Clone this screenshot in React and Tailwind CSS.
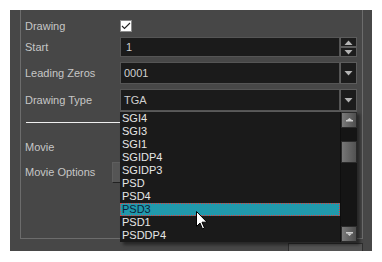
const ITEMS = ["SGI4", "SGI3", "SGI1", "SGIDP4", "SGIDP3", "PSD", "PSD4", "PSD3", "PSD1", "PSDDP4"];

function Tri({ up }) {
  return (
    <svg width="9" height="5" viewBox="0 0 9 5">
      <polygon points={up ? "0.5,5 8.5,5 4.5,0.5" : "0.5,0 8.5,0 4.5,4.5"} fill="#b4b4b4" />
    </svg>
  );
}

function DropButton() {
  return (
    <div className="flex w-[17px] items-center justify-center border border-[#5c5c5c] bg-[#1c1c1c]">
      <Tri />
    </div>
  );
}

function ScrollArrow({ up }) {
  return (
    <div className="flex h-[16px] items-center justify-center border border-[#2a2a2a] bg-gradient-to-r from-[#7a7a7a] to-[#4e4e4e]">
      <svg width="7" height="4" viewBox="0 0 7 4">
        {up ? (
          <>
            <polygon points="1,2 6,2 3.5,0" fill="#cfcfcf" />
            <rect x="0" y="2" width="7" height="1.5" fill="#cfcfcf" />
          </>
        ) : (
          <>
            <rect x="0" y="0" width="7" height="1.5" fill="#cfcfcf" />
            <polygon points="1,1.5 6,1.5 3.5,4" fill="#cfcfcf" />
          </>
        )}
      </svg>
    </div>
  );
}

function Label({ children, w = "w-[99px]" }) {
  return <div className={`${w} shrink-0 pl-[4px] text-[11px] leading-none text-[#c6c6c6]`}>{children}</div>;
}

export default function App() {
  return (
    <div
      className="h-[262px] w-[382px] bg-white pl-[10px] pt-[10px]"
      style={{ fontFamily: '"Liberation Sans", Arial, sans-serif' }}
    >
      <div className="relative h-[241px] w-[362px] overflow-hidden bg-[#474747]">
        {/* group box */}
        <div className="ml-[10px] flex h-[229px] w-[343px] flex-col border-x border-b border-[#6c6c6c]">
          <div className="mt-[10px] flex h-[12px] items-center">
            <Label>Drawing</Label>
            <div className="flex h-[12px] w-[12px] items-center justify-center border border-[#8a8a8a] bg-white">
              <svg width="10" height="8" viewBox="0 0 10 8">
                <polyline points="1,4 3.5,6.5 9,1" fill="none" stroke="#222" strokeWidth="1.1" />
              </svg>
            </div>
          </div>

          <div className="mt-[5px] flex h-[20px] items-center">
            <Label>Start</Label>
            <div className="flex h-full w-[220px] items-center border border-[#555] bg-[#1b1b1b] pl-[5px] text-[11px] text-[#cfcfcf]">
              1
            </div>
            <div className="flex h-full w-[17px] flex-col">
              <div className="flex h-[10px] items-center justify-center border border-[#5c5c5c] bg-[#1c1c1c]">
                <Tri up />
              </div>
              <div className="flex h-[10px] items-center justify-center border border-[#5c5c5c] bg-[#1c1c1c]">
                <Tri />
              </div>
            </div>
          </div>

          <div className="mt-[5px] flex h-[22px] items-center">
            <Label>Leading Zeros</Label>
            <div className="flex h-full w-[220px] items-center border border-[#555] bg-[#1b1b1b] pl-[3px] text-[11px] text-[#cfcfcf]">
              0001
            </div>
            <div className="flex h-full">
              <DropButton />
            </div>
          </div>

          <div className="mt-[5px] flex h-[22px] items-center">
            <Label>Drawing Type</Label>
            <div className="flex h-full w-[220px] items-center border border-[#555] bg-[#1b1b1b] pl-[3px] text-[11px] text-[#cfcfcf]">
              TGA
            </div>
            <div className="flex h-full">
              <DropButton />
            </div>
          </div>

          <div className="ml-[5px] mt-[11px] h-px w-[200px] bg-[#f0f0f0]" />

          <div className="mt-[13px] flex h-[22px] items-center">
            <Label>Movie</Label>
          </div>

          <div className="mt-[4px] flex h-[21px] items-center">
            <Label w="w-[91px]">Movie Options</Label>
            <div className="h-full w-[120px] border border-[#5e5e5e] border-b-[#222] bg-[#555]" />
          </div>
        </div>

        {/* bottom buttons */}
        <div className="mt-[4px] flex justify-end pr-[9px]">
          <div className="h-[24px] w-[75px] border border-[#2e2e2e] bg-[#555] pt-[5px] text-center text-[11px] text-[#e0e0e0]">
            Close
          </div>
        </div>

        {/* open dropdown list */}
        <div className="absolute left-[110px] top-[101px] flex h-[131px] w-[237px] border-t border-[#5a5a5a] bg-[#1a1a1a] shadow-[3px_3px_3px_rgba(0,0,0,0.45)]">
          <div className="w-[220px]">
            {ITEMS.map((it) =>
              it === "PSD3" ? (
                <div
                  key={it}
                  className="flex h-[13px] items-center border border-dotted border-[#e03a3a] bg-[#2199ac] pl-[1px] text-[11px] text-[#0c2238]"
                >
                  {it}
                </div>
              ) : (
                <div key={it} className="flex h-[13px] items-center pl-[2px] text-[11px] text-[#e6e6e6]">
                  {it}
                </div>
              )
            )}
          </div>
          <div className="flex w-[17px] flex-col border-l border-[#0e0e0e] bg-[#151515]">
            <ScrollArrow up />
            <div className="h-[13px]" />
            <div className="h-[22px] border border-[#2a2a2a] bg-gradient-to-r from-[#777] to-[#525252]" />
            <div className="flex-1" />
            <ScrollArrow />
          </div>
        </div>

        {/* mouse cursor */}
        <svg className="absolute left-[186px] top-[201px]" width="12" height="19" viewBox="0 0 12 19">
          <path d="M0.5,0.5 L0.5,15.5 L4,12 L6.5,18 L8.5,17 L6,11.2 L11,11.2 Z" fill="#fff" stroke="#000" strokeWidth="1" />
        </svg>
      </div>
    </div>
  );
}
